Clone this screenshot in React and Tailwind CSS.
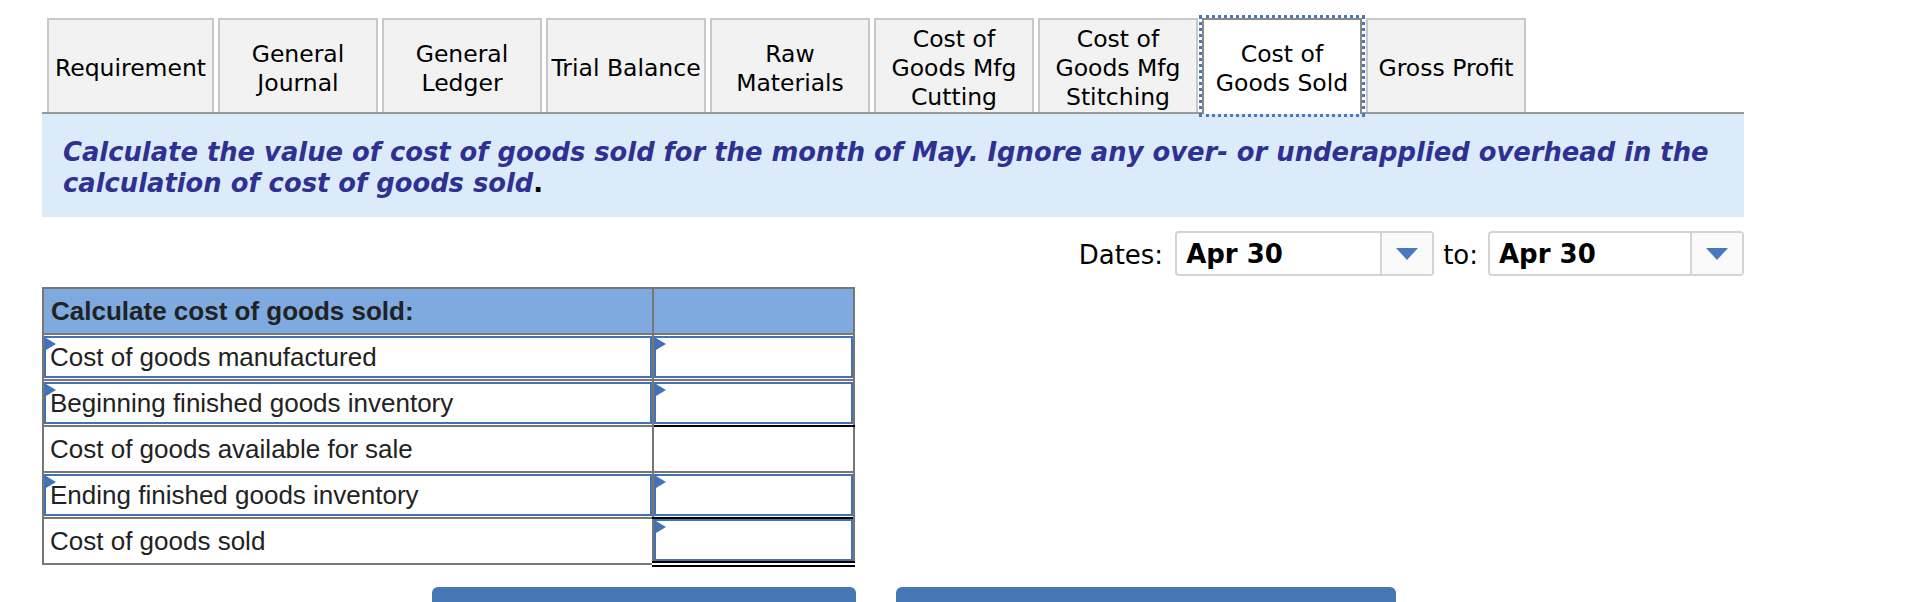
import React from 'react';

const Tri = () => (
  <svg className="absolute left-0 top-0" width="10" height="12" viewBox="0 0 10 12">
    <polygon points="0,0 10,6 0,12" fill="#4472b4" />
  </svg>
);

function Tab({ lines, w, selected }) {
  if (selected) {
    return (
      <div
        className={`${w} h-[96px] -mb-[2px] relative z-10 bg-white border-2 border-b-0 border-[#8a8a8a] outline-[3px] outline-dotted outline-[#4a78c0] flex flex-col items-center justify-center text-center leading-[29px] pt-[4px] shrink-0`}
      >
        {lines.map((l) => (
          <span key={l}>{l}</span>
        ))}
      </div>
    );
  }
  return (
    <div
      className={`${w} h-[94px] bg-[#f2f2f2] border-2 border-b-0 border-[#c8c8c8] flex flex-col items-center justify-center text-center leading-[29px] pt-[5px] shrink-0`}
    >
      {lines.map((l) => (
        <span key={l}>{l}</span>
      ))}
    </div>
  );
}

function InputCell({ children }) {
  return (
    <div className="relative h-[42px] border-2 border-[#4472b4] flex items-center pl-[4px]">
      <Tri />
      {children}
    </div>
  );
}

function Select({ w }) {
  return (
    <div className={`${w} h-[45px] shrink-0 border-2 border-[#d4d4d4] rounded-[4px] flex bg-white`}>
      <div className="flex-1 flex items-center pl-[9px] pt-[2px] font-bold text-[26px] text-black">Apr 30</div>
      <div className="w-[52px] border-l-2 border-[#d4d4d4] bg-[#fafafa] flex items-center justify-center">
        <svg width="22" height="12" viewBox="0 0 22 12">
          <polygon points="0,0 22,0 11,12" fill="#4a78c0" />
        </svg>
      </div>
    </div>
  );
}

export default function App() {
  return (
    <div
      className="w-[1930px] h-[602px] bg-white overflow-hidden text-black"
      style={{ fontFamily: '"DejaVu Sans", Verdana, sans-serif' }}
    >
      <div className="pl-[42px] pt-[18px] w-[1744px] text-[23.5px]">
        {/* Tabs */}
        <div className="flex gap-[4px] pl-[5px] border-b-2 border-[#999] items-end">
          <Tab w="w-[167px]" lines={['Requirement']} />
          <Tab w="w-[160px]" lines={['General', 'Journal']} />
          <Tab w="w-[160px]" lines={['General', 'Ledger']} />
          <Tab w="w-[160px]" lines={['Trial Balance']} />
          <Tab w="w-[160px]" lines={['Raw', 'Materials']} />
          <Tab w="w-[160px]" lines={['Cost of', 'Goods Mfg', 'Cutting']} />
          <Tab w="w-[160px]" lines={['Cost of', 'Goods Mfg', 'Stitching']} />
          <Tab w="w-[160px]" lines={['Cost of', 'Goods Sold']} selected />
          <Tab w="w-[160px]" lines={['Gross Profit']} />
        </div>

        {/* Instruction */}
        <div className="h-[103px] bg-[#dcebf9] pl-[21px] pt-[23px] leading-[31px]">
          <p className="font-bold italic text-[#2e3192] text-[25.8px] whitespace-nowrap">
            Calculate the value of cost of goods sold for the month of May. Ignore any over- or underapplied overhead in the
            <br />
            calculation of cost of goods sold<span className="text-black not-italic">.</span>
          </p>
        </div>

        {/* Dates */}
        <div className="flex justify-end items-center mt-[14px] text-[26px]">
          <span className="mr-[12px] pt-[3px]">Dates:</span>
          <Select w="w-[259px]" />
          <span className="ml-[9px] mr-[10px] pt-[3px]">to:</span>
          <Select w="w-[256px]" />
        </div>

        {/* Table */}
        <table
          className="mt-[11px] border-collapse table-fixed w-[811px] text-[26px] text-[#222]"
          style={{ fontFamily: '"Liberation Sans", Arial, sans-serif' }}
        >
          <colgroup>
            <col className="w-[610px]" />
            <col className="w-[201px]" />
          </colgroup>
          <tbody>
            <tr className="h-[46px] bg-[#7eaadf]">
              <td className="border-2 border-[#777] p-0 pl-[7px] font-bold">Calculate cost of goods sold:</td>
              <td className="border-2 border-[#777] p-0"></td>
            </tr>
            <tr className="h-[46px]">
              <td className="border-2 border-[#777] p-0">
                <InputCell>Cost of goods manufactured</InputCell>
              </td>
              <td className="border-2 border-[#777] p-0">
                <InputCell />
              </td>
            </tr>
            <tr className="h-[46px]">
              <td className="border-2 border-[#777] p-0">
                <InputCell>Beginning finished goods inventory</InputCell>
              </td>
              <td className="border-2 border-[#777] border-b-black p-0">
                <InputCell />
              </td>
            </tr>
            <tr className="h-[46px]">
              <td className="border-2 border-[#777] p-0 pl-[6px]">Cost of goods available for sale</td>
              <td className="border-2 border-[#777] border-t-black p-0"></td>
            </tr>
            <tr className="h-[46px]">
              <td className="border-2 border-[#777] p-0">
                <InputCell>Ending finished goods inventory</InputCell>
              </td>
              <td className="border-2 border-[#777] border-b-black p-0">
                <InputCell />
              </td>
            </tr>
            <tr className="h-[46px]">
              <td className="border-2 border-[#777] p-0 pl-[6px]">Cost of goods sold</td>
              <td className="border-2 border-[#777] border-t-black border-b-[6px] border-b-black border-double p-0">
                <InputCell />
              </td>
            </tr>
          </tbody>
        </table>

        {/* Buttons */}
        <div className="flex gap-[40px] ml-[390px] mt-[20px]">
          <div className="w-[424px] h-[40px] bg-[#4577b4] rounded-t-[6px]" />
          <div className="w-[500px] h-[40px] bg-[#4577b4] rounded-t-[6px]" />
        </div>
      </div>
    </div>
  );
}
